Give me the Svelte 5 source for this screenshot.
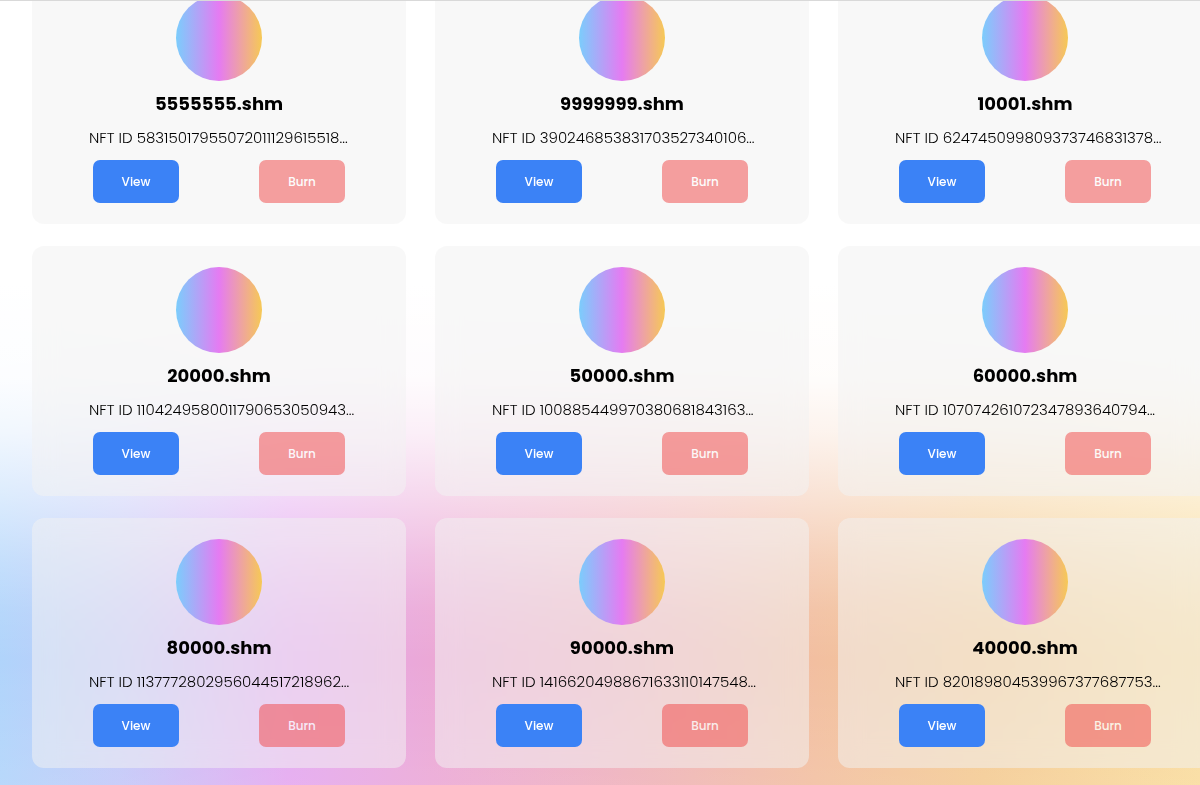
<script lang="ts">
    type Domain = { name: string; id: string };

    const domains: Domain[] = [
        { name: "5555555.shm", id: "58315017955072011129615518" },
        { name: "9999999.shm", id: "390246853831703527340106" },
        { name: "10001.shm", id: "624745099809373746831378" },
        { name: "20000.shm", id: "1104249580011790653050943" },
        { name: "50000.shm", id: "100885449970380681843163" },
        { name: "60000.shm", id: "107074261072347893640794" },
        { name: "80000.shm", id: "1137772802956044517218962" },
        { name: "90000.shm", id: "14166204988671633110147548" },
        { name: "40000.shm", id: "820189804539967377687753" },
    ];
</script>

<main class="page">
    <div class="grid">
        {#each domains as domain}
            <article class="card">
                <div class="avatar"></div>
                <h2>{domain.name}</h2>
                <p>NFT ID {domain.id}...</p>
                <div class="actions">
                    <button class="view">View</button>
                    <button class="burn" disabled>Burn</button>
                </div>
            </article>
        {/each}
    </div>
</main>

<style>
    :global(body) {
        margin: 0;
        background: #fff;
    }

    .page {
        overflow: hidden;
        border-top: 1px solid #d9d9d9;
        padding: 0 0 17px 32px;
        font-family: Poppins, Inter, sans-serif;
        color: #000;
        background:
            linear-gradient(
                to bottom,
                #fff 36%,
                rgba(255, 255, 255, 0.96) 48%,
                rgba(255, 255, 255, 0.82) 55%,
                rgba(255, 255, 255, 0.56) 63%,
                rgba(255, 255, 255, 0.28) 71%,
                rgba(255, 255, 255, 0.08) 78%,
                rgba(255, 255, 255, 0) 84%,
                rgba(255, 255, 255, 0.1) 100%
            ),
            linear-gradient(
                to right,
                #b0d4fb 0%,
                #c3c8f8 10%,
                #e4a8f0 24%,
                #eba8d6 36%,
                #efb1bc 52%,
                #f2bfa0 68%,
                #f4cb94 82%,
                #f9dc9e 100%
            );
    }

    .grid {
        display: grid;
        grid-template-columns: repeat(3, 1fr);
        gap: 22px 29px;
        /* the list is scrolled: first row and last column run past the edge */
        margin: -27px -12px 0 0;
    }

    .card {
        display: flex;
        flex-direction: column;
        align-items: center;
        padding: 21px 0;
        border-radius: 12px;
        background: rgba(242, 242, 242, 0.53);
        backdrop-filter: blur(12px);
    }

    .avatar {
        width: 86px;
        height: 86px;
        border-radius: 50%;
        background: linear-gradient(to right, #7bcdfc, #e57bf2, #f6c955);
    }

    h2 {
        margin: 9px 0;
        font-size: 18px;
        line-height: 28px;
        font-weight: 700;
    }

    p {
        width: 260px;
        margin: 0 0 11px;
        font-size: 15px;
        line-height: 22px;
        font-weight: 300;
        white-space: nowrap;
    }

    .actions {
        display: flex;
        justify-content: space-between;
        width: 252px;
    }

    button {
        width: 86px;
        height: 43px;
        border: 0;
        border-radius: 7px;
        padding: 0;
        font-family: inherit;
        font-size: 12px;
        font-weight: 500;
        color: #fff;
    }

    .view {
        background: #3b82f6;
        cursor: pointer;
    }

    .burn {
        background: #ef4444;
        opacity: 0.5;
    }
</style>
